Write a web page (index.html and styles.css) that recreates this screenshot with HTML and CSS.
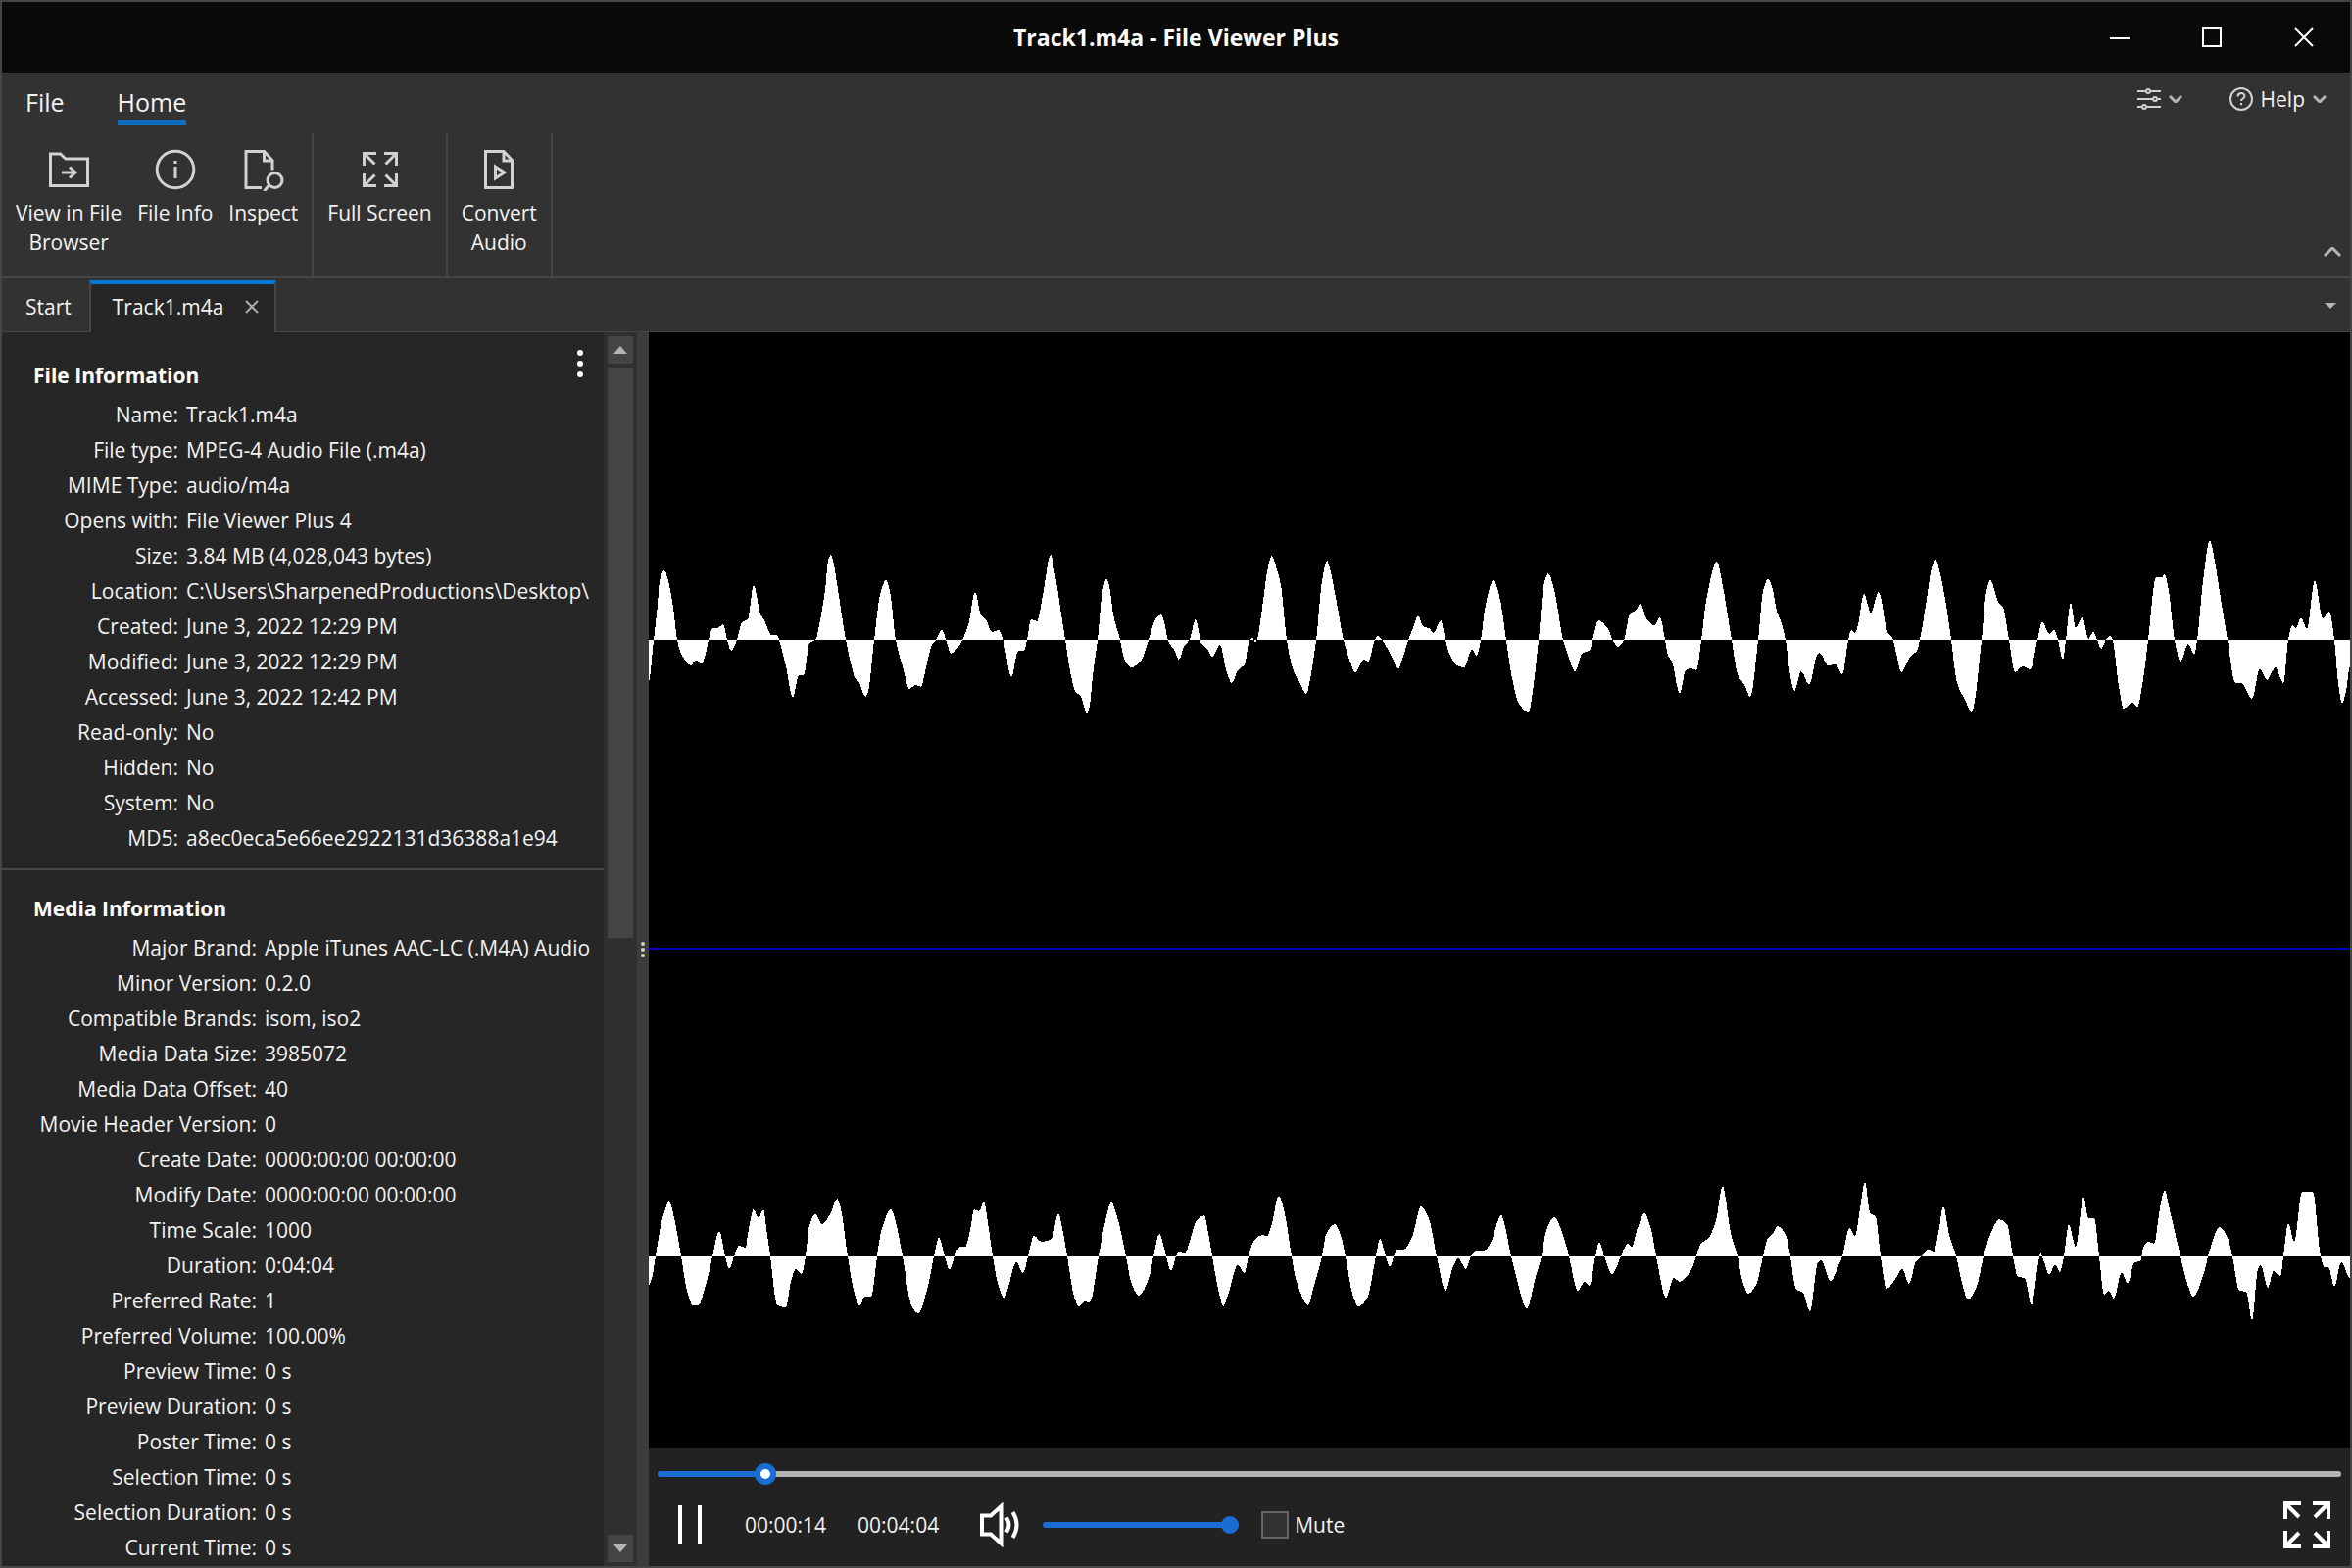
FILE: index.html
```html
<!DOCTYPE html>
<html lang="en">
<head>
    <meta charset="UTF-8">
    <meta name="viewport" content="width=device-width, initial-scale=1.0">
    <title>Track1.m4a - File Viewer Plus</title>
    <link rel="stylesheet" href="styles.css">
</head>
<body>

    <div class="window">
        <header class="title-bar">
            <h1>Track1.m4a - File Viewer Plus</h1>
            <div class="window-buttons">
                <button aria-label="Minimize"><svg width="20" height="20"><path d="M0 11h20"/></svg></button>
                <button aria-label="Maximize"><svg width="20" height="20"><path d="M1 1h18v18H1z"/></svg></button>
                <button aria-label="Close"><svg width="20" height="20"><path d="M1 1l18 18M19 1L1 19"/></svg></button>
            </div>
        </header>

        <!-- Ribbon -->
        <div class="ribbon">
            <nav class="menu">
                <button>File</button>
                <button class="active">Home</button>
                <div class="menu-right">
                    <button aria-label="Options">
                        <svg width="24" height="24">
                            <path d="M0 4h8M14 4h10M0 12h15M21 12h3M0 20h4M10 20h14"/>
                            <circle cx="11" cy="4" r="2"/><circle cx="18" cy="12" r="2"/><circle cx="7" cy="20" r="2"/>
                        </svg>
                        <svg class="chevron" width="14" height="8"><path d="M1 1l6 6 6-6"/></svg>
                    </button>
                    <button>
                        <svg width="24" height="24">
                            <circle cx="12" cy="12" r="11"/>
                            <path d="M8.500 9.500c0-4.500 7-4.500 7-.5 0 2.500-3.500 2.500-3.500 5M12 16v2.200"/>
                        </svg>
                        <span>Help</span>
                        <svg class="chevron" width="14" height="8"><path d="M1 1l6 6 6-6"/></svg>
                    </button>
                </div>
            </nav>
            <div class="tools">
                <div class="group">
                    <button class="tool">
                        <svg width="44" height="44"><path d="M3.500 6h10l5.500 5h22.500v27.500h-38zM15 25h13M23 19.500l6 5.500-6 5.500"/></svg>
                        View in File<br>Browser
                    </button>
                    <button class="tool">
                        <svg width="44" height="44"><circle cx="22" cy="22" r="18.800"/><path d="M22 19v12M22 13v3"/></svg>
                        File Info
                    </button>
                    <button class="tool">
                        <svg width="44" height="44"><path d="M20 40.500H4V3.500h18.500l8.500 9v10M22.500 3.500v9.500H31M28 37.500l-5.500 6.500"/><circle cx="33.500" cy="33" r="7.500"/></svg>
                        Inspect
                    </button>
                </div>
                <div class="group">
                    <button class="tool">
                        <svg width="44" height="44"><path d="M5.500 18V5.500H18M6 6l10.500 10.500M26 5.500h12.500V18M38 6L27.500 16.500M5.500 26v12.500H18M6 38l10.500-10.500M38.500 26v12.500H26M38 38L27.500 27.500"/></svg>
                        Full Screen
                    </button>
                </div>
                <div class="group">
                    <button class="tool">
                        <svg width="44" height="44"><path d="M8.500 3.500H27l8.500 9v28h-27zM27 3.500V13h8.500M18.500 19v12l9-6z"/></svg>
                        Convert<br>Audio
                    </button>
                </div>
                <button class="collapse" aria-label="Collapse ribbon">
                    <svg width="18" height="10"><path d="M1 9l8-8 8 8"/></svg>
                </button>
            </div>
        </div>

        <!-- Open files -->
        <div class="tabs">
            <button class="tab">Start</button>
            <div class="tab open">
                <span>Track1.m4a</span>
                <button aria-label="Close tab"><svg width="14" height="14"><path d="M1 1l12 12M13 1L1 13"/></svg></button>
            </div>
            <button class="tab-list" aria-label="Open files"><svg width="12" height="6"><path d="M0 0h12L6 6z"/></svg></button>
        </div>

        <div class="content">
            <aside class="sidebar">
                <button class="more" aria-label="More"><i></i><i></i><i></i></button>
                <section class="info">
                    <h2>File Information</h2>
                    <dl>
                        <dt>Name:</dt><dd>Track1.m4a</dd>
                        <dt>File type:</dt><dd>MPEG-4 Audio File (.m4a)</dd>
                        <dt>MIME Type:</dt><dd>audio/m4a</dd>
                        <dt>Opens with:</dt><dd>File Viewer Plus 4</dd>
                        <dt>Size:</dt><dd>3.84 MB (4,028,043 bytes)</dd>
                        <dt>Location:</dt><dd>C:\Users\SharpenedProductions\Desktop\</dd>
                        <dt>Created:</dt><dd>June 3, 2022 12:29 PM</dd>
                        <dt>Modified:</dt><dd>June 3, 2022 12:29 PM</dd>
                        <dt>Accessed:</dt><dd>June 3, 2022 12:42 PM</dd>
                        <dt>Read-only:</dt><dd>No</dd>
                        <dt>Hidden:</dt><dd>No</dd>
                        <dt>System:</dt><dd>No</dd>
                        <dt>MD5:</dt><dd>a8ec0eca5e66ee2922131d36388a1e94</dd>
                    </dl>
                </section>
                <section class="info media">
                    <h2>Media Information</h2>
                    <dl>
                        <dt>Major Brand:</dt><dd>Apple iTunes AAC-LC (.M4A) Audio</dd>
                        <dt>Minor Version:</dt><dd>0.2.0</dd>
                        <dt>Compatible Brands:</dt><dd>isom, iso2</dd>
                        <dt>Media Data Size:</dt><dd>3985072</dd>
                        <dt>Media Data Offset:</dt><dd>40</dd>
                        <dt>Movie Header Version:</dt><dd>0</dd>
                        <dt>Create Date:</dt><dd>0000:00:00 00:00:00</dd>
                        <dt>Modify Date:</dt><dd>0000:00:00 00:00:00</dd>
                        <dt>Time Scale:</dt><dd>1000</dd>
                        <dt>Duration:</dt><dd>0:04:04</dd>
                        <dt>Preferred Rate:</dt><dd>1</dd>
                        <dt>Preferred Volume:</dt><dd>100.00%</dd>
                        <dt>Preview Time:</dt><dd>0 s</dd>
                        <dt>Preview Duration:</dt><dd>0 s</dd>
                        <dt>Poster Time:</dt><dd>0 s</dd>
                        <dt>Selection Time:</dt><dd>0 s</dd>
                        <dt>Selection Duration:</dt><dd>0 s</dd>
                        <dt>Current Time:</dt><dd>0 s</dd>
                    </dl>
                </section>
            </aside>

            <div class="scrollbar">
                <button aria-label="Scroll up"><svg width="14" height="8"><path d="M0 8h14L7 0z"/></svg></button>
                <div class="scroll-track"><div class="scroll-thumb"></div></div>
                <button aria-label="Scroll down"><svg width="14" height="8"><path d="M0 0h14L7 8z"/></svg></button>
            </div>
            <div class="splitter"><i></i><i></i><i></i></div>

            <main class="viewer">
                <svg class="waveform" viewBox="0 0 1736 1139" preserveAspectRatio="none">
                    <path id="left"/>
                    <path id="right"/>
                    <path class="middle" d="M0 629h1736"/>
                </svg>
                <div class="player">
                    <input class="seek" type="range" min="0" max="244" step="0.1" value="14.3" aria-label="Position">
                    <div class="controls">
                        <button aria-label="Pause"><svg width="24" height="40"><path d="M0 0h4v40H0zM20 0h4v40h-4z"/></svg></button>
                        <span class="time">00:00:14</span>
                        <span class="time">00:04:04</span>
                        <svg class="speaker" width="42" height="46"><path d="M2 13.500h9L21.500 4v38L11 32.500H2z"/><path d="M27 15.500q5 7.500 0 15M33.500 10q8 13 0 26"/></svg>
                        <input class="volume" type="range" min="0" max="100" value="100" aria-label="Volume">
                        <label class="mute"><input type="checkbox">Mute</label>
                        <button class="full" aria-label="Full screen"><svg width="48" height="48"><path d="M2 18V2h16M3 3l13 13M30 2h16v16M45 3L32 16M2 30v16h16M3 45l13-13M46 30v16H30M45 45L32 32"/></svg></button>
                    </div>
                </div>
            </main>
        </div>
    </div>

    <script src="waveform.js"></script>
</body>
</html>
```
FILE: styles.css
```css
* {
    box-sizing: border-box;
}
body {
    margin: 0;
    font-family: "Open Sans", "Noto Sans", sans-serif;
    font-size: 21px;
    line-height: 30px;
    color: #f2f2f2;
    background-color: #323232;
}
button {
    padding: 0;
    border: none;
    background: none;
    color: inherit;
    font: inherit;
}
svg {
    display: block;
    fill: none;
    stroke: #d2d2d2;
    stroke-width: 2;
    flex: none;
}
h1, h2, dl, dd {
    margin: 0;
}
.window {
    height: 100vh;
    display: flex;
    flex-direction: column;
    border: 2px solid #464646;
}

/* title bar */
.title-bar {
    height: 72px;
    flex: none;
    display: flex;
    align-items: center;
    background-color: #0a0a0a;
}
.title-bar h1 {
    flex: 1;
    padding-left: 282px;
    text-align: center;
    font-size: 23px;
    color: #fff;
}
.window-buttons {
    display: flex;
}
.window-buttons button {
    width: 94px;
    height: 72px;
    display: flex;
    align-items: center;
    justify-content: center;
}
.window-buttons svg {
    stroke: #fff;
}

/* ribbon */
.ribbon {
    flex: none;
    border-bottom: 2px solid #464646;
}
.menu {
    height: 62px;
    padding: 12px 24px 0;
    display: flex;
    align-items: flex-start;
    gap: 54px;
    font-size: 25px;
    line-height: 36px;
}
.menu .active {
    border-bottom: 6px solid #106ebe;
}
.menu-right {
    margin-left: auto;
    display: flex;
    gap: 48px;
    font-size: 21px;
    line-height: 30px;
}
.menu-right button {
    display: flex;
    align-items: center;
    gap: 8px;
}
.chevron {
    stroke: #b4b4b4;
    stroke-width: 3;
}
.tools {
    height: 146px;
    display: flex;
}
.group {
    padding: 0 6px;
    display: flex;
    align-items: flex-start;
    border-right: 2px solid #464646;
}
.tool {
    padding: 15px 8px 0;
}
.tool svg {
    margin: 0 auto 7px;
    stroke-width: 3;
}
.collapse {
    margin: auto 9px 20px auto;
}
.collapse svg {
    stroke: #b4b4b4;
    stroke-width: 3;
}

/* tabs */
.tabs {
    height: 55px;
    flex: none;
    display: flex;
    align-items: stretch;
    box-shadow: inset 0 -1px #464646;
}
.tab {
    padding: 2px 18px 0 24px;
}
.tab.open {
    margin-top: 2px;
    padding: 0 16px 4px 22px;
    display: flex;
    align-items: center;
    gap: 22px;
    background-color: #262626;
    border: 2px solid #464646;
    border-width: 4px 2px 0;
    border-top-color: #0078d7;
}
.tab.open svg {
    stroke: #aaa;
}
.tab-list {
    margin-left: auto;
    padding-right: 14px;
}
.tab-list svg, .scrollbar svg {
    fill: #b4b4b4;
    stroke: none;
}

/* file details */
.content {
    flex: 1;
    min-height: 0;
    display: flex;
}
.sidebar {
    position: relative;
    width: 614px;
    flex: none;
    padding-top: 5px;
    overflow: hidden;
    background-color: #262626;
}
.info {
    padding: 21px 0 13px;
    line-height: 36px;
}
.info h2 {
    margin: 0 0 4px 32px;
    font-size: 21px;
    line-height: 36px;
    color: #fff;
}
.info dl {
    display: grid;
    grid-template-columns: 180px 1fr;
    column-gap: 8px;
    white-space: nowrap;
}
.info dt {
    text-align: right;
}
.media {
    border-top: 2px solid #464646;
}
.media dl {
    grid-template-columns: 260px 1fr;
}
.more {
    position: absolute;
    top: 18px;
    right: 21px;
    display: grid;
    gap: 5px;
}
.more i {
    width: 6px;
    height: 6px;
    border-radius: 50%;
    background-color: #fff;
}
.scrollbar {
    width: 34px;
    flex: none;
    padding: 4px;
    display: flex;
    flex-direction: column;
    gap: 4px;
    background-color: #303030;
}
.scrollbar button {
    height: 28px;
    display: flex;
    align-items: center;
    justify-content: center;
    background-color: #444;
}
.scroll-track {
    flex: 1;
}
.scroll-thumb {
    height: 49%;
    background-color: #444;
}
.splitter {
    width: 12px;
    flex: none;
    display: flex;
    flex-direction: column;
    align-items: center;
    justify-content: center;
    gap: 2px;
    background-color: #3c3c3c;
}
.splitter i {
    width: 4px;
    height: 4px;
    border-radius: 50%;
    background-color: #d2d2d2;
}

/* player */
.viewer {
    flex: 1;
    min-width: 0;
    display: flex;
    flex-direction: column;
    background-color: #000;
}
.waveform {
    width: 100%;
    flex: 1;
    min-height: 0;
    fill: #fff;
    stroke: none;
    shape-rendering: crispEdges;
}
.middle {
    stroke: #0000b4;
    stroke-width: 2;
}
.player {
    height: 120px;
    flex: none;
    padding: 15px 9px 0;
    background-color: #222;
}
input[type="range"] {
    display: block;
    margin: 0;
    height: 22px;
    appearance: none;
    background: none;
}
input[type="range"]::-webkit-slider-runnable-track {
    height: 6px;
    border-radius: 3px;
    background-color: #1a6dd4;
}
input[type="range"]::-webkit-slider-thumb {
    appearance: none;
    width: 18px;
    height: 18px;
    margin-top: -6px;
    border-radius: 50%;
    background-color: #1a6dd4;
}
.seek {
    width: 100%;
}
input.seek::-webkit-slider-runnable-track {
    background: linear-gradient(to right, #1a6dd4 6%, #b4b4b4 6%);
}
input.seek::-webkit-slider-thumb {
    width: 22px;
    height: 22px;
    margin-top: -8px;
    border: 6px solid #1a6dd4;
    background-color: #fff;
}
.controls {
    height: 48px;
    margin-top: 17px;
    padding: 0 11px 0 21px;
    display: flex;
    align-items: center;
}
.controls svg {
    fill: #fff;
    stroke: none;
}
.time {
    margin-left: 32px;
}
.controls button + .time {
    margin-left: 44px;
}
.controls .speaker {
    margin: 0 22px 0 42px;
    fill: none;
    stroke: #fff;
    stroke-width: 4;
}
.volume {
    width: 200px;
}
.mute {
    margin-left: 23px;
    display: flex;
    align-items: center;
    gap: 6px;
}
.mute input {
    appearance: none;
    width: 28px;
    height: 28px;
    margin: 0;
    border: 2px solid #666;
    background-color: #323232;
}
.controls .full {
    margin-left: auto;
}
.controls .full svg {
    fill: none;
    stroke: #fff;
    stroke-width: 4;
}
```
FILE: waveform.js
```js
// x, level pairs for each channel
const leftChannel = [
    0,-42, 5,0, 9,36, 11,60, 16,71, 20,60, 25,33, 29,0, 33,-14, 43,-26, 48,-21, 54,-24, 58,-14, 61,0, 65,12, 70,12,
    76,16, 80,0, 84,-11, 90,0, 95,18, 101,21, 107,56, 114,26, 118,20, 125,5, 131,5, 133,0, 140,-27, 147,-59,
    153,-36, 158,-36, 164,-3, 170,0, 176,26, 180,51, 183,81, 186,87, 188,81, 194,45, 201,0, 207,-27, 210,-38,
    215,-44, 221,-58, 224,-52, 230,0, 236,46, 242,61, 246,50, 252,0, 259,-27, 266,-50, 272,-46, 278,-48, 281,-37,
    289,-5, 293,0, 299,10, 304,-2, 308,-14, 316,-7, 320,0, 326,15, 333,49, 339,25, 344,21, 350,8, 357,10, 362,-1,
    370,-38, 377,-11, 383,-11, 386,0, 390,21, 396,19, 402,45, 410,87, 415,65, 421,26, 425,0, 430,-32, 435,-52,
    441,-58, 447,-75, 450,-67, 453,-37, 458,0, 463,50, 467,62, 470,55, 474,26, 481,0, 485,-19, 492,-28, 502,-22,
    510,0, 517,21, 523,26, 526,18, 530,-1, 536,-10, 541,-20, 546,-7, 552,1, 558,21, 564,-4, 570,-9, 575,-17,
    583,-5, 589,-30, 595,-44, 601,-31, 608,-25, 613,0, 616,2, 619,-2, 621,1, 626,33, 632,75, 636,86, 640,75,
    645,56, 651,0, 657,-29, 664,-43, 671,-55, 674,-45, 681,0, 687,60, 692,81, 695,73, 702,38, 709,0, 714,-17,
    721,-33, 730,-20, 734,-22, 741,0, 744,4, 749,-1, 757,-15, 765,-29, 769,-20, 775,0, 780,12, 785,25, 790,14,
    796,12, 801,7, 808,20, 813,0, 817,-14, 825,-26, 832,-28, 840,-10, 845,-16, 849,0, 854,36, 862,61, 868,45,
    875,0, 880,-34, 888,-65, 898,-74, 901,-60, 908,0, 913,55, 918,68, 924,51, 933,0, 938,-15, 945,-32, 953,-13,
    960,-11, 963,0, 969,20, 979,11, 984,-1, 989,-7, 995,0, 1001,26, 1007,30, 1012,37, 1018,22, 1026,15, 1032,23,
    1037,0, 1040,-16, 1044,-22, 1052,-55, 1058,-31, 1063,-29, 1069,-31, 1074,0, 1079,40, 1090,80, 1095,60,
    1105,0, 1111,-35, 1118,-46, 1124,-58, 1132,0, 1137,50, 1142,62, 1146,55, 1151,30, 1156,17, 1160,0, 1165,-37,
    1169,-52, 1176,-32, 1184,-46, 1192,-16, 1195,-13, 1203,-26, 1211,-25, 1218,-35, 1224,0, 1227,10, 1231,7,
    1234,16, 1240,47, 1247,28, 1255,49, 1264,8, 1269,2, 1273,-14, 1278,-33, 1287,-17, 1294,-11, 1297,0, 1303,35,
    1309,73, 1313,83, 1317,71, 1324,35, 1329,0, 1335,-44, 1343,-61, 1350,-74, 1353,-62, 1360,0, 1365,50, 1369,61,
    1377,39, 1382,33, 1388,0, 1394,-33, 1402,-27, 1410,-30, 1417,0, 1422,19, 1429,6, 1434,10, 1438,0, 1443,-20,
    1446,0, 1451,38, 1456,12, 1463,24, 1469,1, 1474,8, 1478,0, 1482,-9, 1488,2, 1492,4, 1494,-1, 1500,-47,
    1505,-70, 1514,-64, 1519,-68, 1525,-40, 1530,0, 1538,64, 1544,64, 1547,67, 1551,50, 1557,0, 1563,-22,
    1571,-4, 1577,-15, 1580,0, 1586,60, 1593,102, 1597,86, 1605,36, 1611,0, 1619,-44, 1625,-44, 1636,-60,
    1644,-29, 1651,-41, 1660,-28, 1668,-44, 1673,0, 1677,15, 1681,12, 1686,23, 1692,11, 1700,61, 1708,22,
    1715,29, 1720,0, 1724,-44, 1728,-65, 1732,-52, 1736,-27
];
const rightChannel = [
    0,-29, 3,-23, 7,0, 13,35, 21,56, 26,39, 33,0, 39,-35, 45,-50, 51,-50, 55,-40, 61,-18, 65,0, 72,26, 78,0,
    82,-13, 87,0, 92,11, 99,9, 101,22, 107,48, 112,39, 117,48, 120,29, 124,0, 131,-50, 140,-52, 145,-26, 150,-13,
    156,-18, 160,0, 164,32, 170,43, 177,33, 186,45, 192,59, 196,49, 203,0, 210,-38, 215,-50, 221,-41, 227,-41,
    233,0, 237,25, 247,48, 251,39, 259,0, 268,-50, 275,-58, 285,-30, 291,0, 296,19, 302,0, 307,-14, 312,0,
    318,10, 323,10, 328,27, 332,48, 337,46, 342,56, 346,35, 351,0, 357,-31, 363,-43, 367,-31, 375,-6, 382,-17,
    387,0, 393,21, 401,15, 411,18, 418,44, 422,29, 427,0, 434,-41, 439,-51, 445,-46, 450,-47, 459,0, 465,32,
    472,55, 478,40, 487,0, 492,-26, 500,-40, 511,-20, 515,0, 521,23, 528,0, 533,-15, 538,0, 541,4, 547,3,
    553,19, 559,37, 567,42, 570,29, 575,0, 582,-38, 586,-51, 591,-40, 601,-9, 608,-17, 612,0, 618,17, 626,22,
    631,21, 635,30, 643,62, 649,44, 656,0, 661,-26, 673,-50, 678,-33, 687,0, 691,22, 700,33, 706,22, 711,0,
    718,-38, 724,-51, 733,-43, 742,0, 746,18, 752,0, 756,-11, 761,2, 764,7, 770,7, 779,20, 788,51, 796,39,
    804,0, 813,-35, 821,-10, 826,-2, 834,-13, 839,0, 844,5, 852,5, 859,14, 870,42, 873,34, 880,0, 884,-16,
    896,-53, 905,-21, 911,0, 916,27, 924,40, 932,25, 939,0, 948,-35, 955,-26, 960,-30, 966,0, 970,15, 975,0,
    983,-18, 992,0, 999,13, 1003,10, 1009,29, 1016,44, 1023,27, 1028,0, 1038,-42, 1046,-22, 1052,-26, 1063,-15,
    1069,0, 1074,14, 1081,18, 1089,37, 1096,72, 1098,64, 1104,24, 1111,0, 1116,-25, 1122,-38, 1130,-29, 1137,0,
    1142,19, 1146,22, 1152,31, 1160,22, 1165,0, 1169,-28, 1172,-35, 1177,-36, 1185,-56, 1193,-6, 1196,-4,
    1206,-25, 1215,-7, 1218,0, 1225,29, 1231,21, 1236,49, 1241,76, 1246,45, 1252,40, 1257,0, 1263,-33, 1272,-23,
    1279,-13, 1286,-28, 1293,-5, 1299,0, 1306,7, 1311,4, 1316,24, 1321,51, 1327,22, 1334,0, 1341,-31, 1346,-44,
    1355,-31, 1362,0, 1370,25, 1378,38, 1386,33, 1392,0, 1397,-21, 1404,-22, 1411,-50, 1419,0, 1420,3, 1423,-3,
    1429,-19, 1435,-8, 1440,-16, 1444,0, 1449,33, 1456,10, 1464,61, 1469,39, 1475,39, 1480,0, 1485,-39, 1490,-35,
    1495,-43, 1503,-16, 1509,-28, 1516,-6, 1522,-5, 1525,9, 1530,15, 1536,13, 1542,49, 1547,68, 1551,52, 1563,0,
    1570,-28, 1576,-41, 1588,-13, 1591,0, 1603,30, 1611,19, 1616,0, 1623,-35, 1630,-36, 1636,-65, 1642,-13,
    1645,-9, 1652,-32, 1658,-15, 1665,-20, 1668,0, 1673,34, 1679,15, 1687,66, 1693,66, 1698,66, 1706,0, 1710,-11,
    1714,-11, 1720,-31, 1727,-6, 1736,-22
];

// slope at point i, flat on every peak so the curve never overshoots
function slope(p, i) {
    if (i < 2 || i + 3 >= p.length) return 0;
    const a = (p[i + 1] - p[i - 1]) / (p[i] - p[i - 2]);
    const b = (p[i + 3] - p[i + 1]) / (p[i + 2] - p[i]);
    return a * b <= 0 ? 0 : 2 * a * b / (a + b);
}

function drawChannel(id, p, base) {
    let d = `M0 ${base}V${base - p[1]}`;
    for (let i = 0; i + 2 < p.length; i += 2) {
        const h = (p[i + 2] - p[i]) / 3;
        d += `C${p[i] + h} ${base - p[i + 1] - slope(p, i) * h}`
           + ` ${p[i + 2] - h} ${base - p[i + 3] + slope(p, i + 2) * h}`
           + ` ${p[i + 2]} ${base - p[i + 3]}`;
    }
    document.getElementById(id).setAttribute("d", d + `V${base}Z`);
}

drawChannel("left", leftChannel, 314);
drawChannel("right", rightChannel, 943);
```
